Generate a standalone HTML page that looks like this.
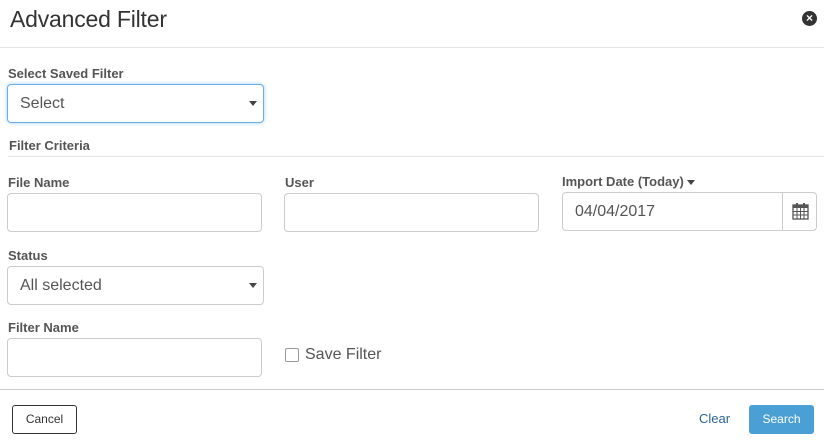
<!DOCTYPE html>
<html><head><style>
*{box-sizing:border-box}
body{margin:0;width:824px;height:445px;background:#fff;font-family:"Liberation Sans",sans-serif;color:#333;position:relative;overflow:hidden}
.a{position:absolute}
.lbl{font-size:13px;font-weight:bold;color:#555}
.inp{border:1px solid #ccc;border-radius:4px;height:39px;background:#fff;font-size:16px;color:#555;padding:0 12px;line-height:37px}
.car{position:absolute;right:6px;top:16px;width:0;height:0;border-left:4px solid transparent;border-right:4px solid transparent;border-top:5px solid #444}
</style></head><body>
<div class="a" style="left:10px;top:6px;font-size:23px;color:#333;letter-spacing:-0.2px">Advanced Filter</div>
<div class="a" style="left:802px;top:11px;width:15px;height:15px;border-radius:50%;background:#333;color:#fff;font-size:12px;line-height:15px;text-align:center;font-weight:bold">×</div>
<div class="a" style="left:0;top:47px;width:824px;height:1px;background:#e5e5e5"></div>
<div class="a lbl" style="left:8px;top:66px">Select Saved Filter</div>
<div class="a inp" style="left:7px;top:84px;width:257px;border-color:#66afe9;box-shadow:0 0 4px rgba(102,175,233,.6)">Select<span class="car"></span></div>
<div class="a lbl" style="left:9px;top:138px">Filter Criteria</div>
<div class="a" style="left:8px;top:156px;width:816px;height:1px;background:#e5e5e5"></div>
<div class="a lbl" style="left:8px;top:175px">File Name</div>
<div class="a inp" style="left:7px;top:193px;width:255px"></div>
<div class="a lbl" style="left:285px;top:175px">User</div>
<div class="a inp" style="left:284px;top:193px;width:255px"></div>
<div class="a lbl" style="left:562px;top:174px">Import Date (Today) <span style="display:inline-block;border-left:4px solid transparent;border-right:4px solid transparent;border-top:5px solid #444;vertical-align:middle"></span></div>
<div class="a inp" style="left:562px;top:192px;width:255px">04/04/2017</div>
<div class="a" style="left:782px;top:193px;width:1px;height:37px;background:#ccc"></div>
<svg class="a" style="left:792px;top:202px" width="17" height="18" viewBox="0 0 17 18"><rect x="1" y="3" width="15" height="14" fill="none" stroke="#555" stroke-width="1.3"/><rect x="1" y="3" width="15" height="3" fill="#555"/><rect x="4" y="1" width="2" height="4" fill="#555"/><rect x="11" y="1" width="2" height="4" fill="#555"/><path d="M1 9.5H16M1 13H16M5 6V17M8.5 6V17M12 6V17" stroke="#555" stroke-width="1"/></svg>
<div class="a lbl" style="left:8px;top:248px">Status</div>
<div class="a inp" style="left:7px;top:266px;width:257px">All selected<span class="car"></span></div>
<div class="a lbl" style="left:8px;top:320px">Filter Name</div>
<div class="a inp" style="left:7px;top:338px;width:255px"></div>
<div class="a" style="left:285px;top:348px;width:14px;height:14px;border:1px solid #999;border-radius:2px"></div>
<div class="a" style="left:305px;top:346px;font-size:16px;color:#555">Save Filter</div>
<div class="a" style="left:0;top:389px;width:824px;height:1px;background:#ccc"></div>
<div class="a" style="left:12px;top:405px;width:65px;height:29px;border:1px solid #333;border-radius:3px;font-size:12px;text-align:center;line-height:27px;color:#333">Cancel</div>
<div class="a" style="left:699px;top:411px;font-size:13px;color:#2a6496">Clear</div>
<div class="a" style="left:749px;top:405px;width:65px;height:29px;background:#4a9fd5;border-radius:3px;color:#fff;font-size:12px;text-align:center;line-height:29px">Search</div>
</body></html>
